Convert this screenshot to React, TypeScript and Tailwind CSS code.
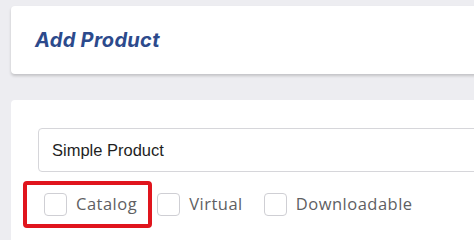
import React from 'react';

const Box = () => (
  <span className="inline-block w-[23px] h-[23px] rounded-[4px] border border-[#cfcfd4] bg-white shrink-0" />
);

export default function App() {
  return (
    <div className="w-[474px] h-[240px] overflow-hidden bg-[#ededf1] pl-[11px] pt-[6px]">
      {/* Header card */}
      <div className="w-[480px] h-[68px] bg-white rounded-[4px] shadow-[0_2px_3px_rgba(0,0,0,0.18)] flex items-center pl-[24px]">
        <h1
          className="text-[20px] font-bold italic text-[#2c4a8c] tracking-[0.3px]"
          style={{ fontFamily: 'Inter, "Noto Sans", sans-serif' }}
        >
          Add Product
        </h1>
      </div>

      {/* Form card */}
      <div className="mt-[26px] w-[480px] h-[200px] bg-white rounded-[4px] pl-[27px] pt-[28px]">
        <div
          className="h-[44px] w-[460px] rounded-[4px] border border-[#d6d6da] flex items-center pl-[13px] text-[16.5px] text-[#1f1f1f]"
          style={{ fontFamily: '"Liberation Sans", Arial, sans-serif' }}
        >
          Simple Product
        </div>

        <div
          className="mt-[9px] -ml-[15px] flex items-center text-[16.5px] text-[#5f5f63] tracking-[0.5px]"
          style={{ fontFamily: '"Open Sans", "Noto Sans", sans-serif' }}
        >
          <label className="flex items-center gap-[9px] border-4 border-[#e0151d] rounded-[4px] h-[47px] pl-[17px] pr-[11px]">
            <Box />
            <span>Catalog</span>
          </label>
          <label className="flex items-center gap-[9px] ml-[5px]">
            <Box />
            <span>Virtual</span>
          </label>
          <label className="flex items-center gap-[9px] ml-[21px]">
            <Box />
            <span>Downloadable</span>
          </label>
        </div>
      </div>
    </div>
  );
}
